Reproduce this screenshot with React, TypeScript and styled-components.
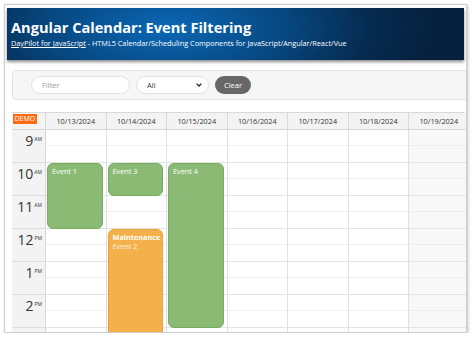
import React from "react";
import styled, { createGlobalStyle } from "styled-components";

const GlobalStyle = createGlobalStyle`
  html, body {
    margin: 0;
    padding: 0;
    background: #ffffff;
    overflow: hidden;
  }
  body {
    font-family: "Open Sans", "Noto Sans", sans-serif;
    color: #333333;
  }
`;

interface CalEvent {
  id: number;
  day: number;
  start: number;
  end: number;
  text: string;
  tag?: string;
  color: string;
  border: string;
}

const days = ["10/13/2024", "10/14/2024", "10/15/2024", "10/16/2024", "10/17/2024", "10/18/2024", "10/19/2024"];
// the last row (3 PM) is scrolled out of view, only its top edge shows
const hours = [
  { h: "9", m: "AM" },
  { h: "10", m: "AM" },
  { h: "11", m: "AM" },
  { h: "12", m: "PM" },
  { h: "1", m: "PM" },
  { h: "2", m: "PM" },
  { h: "", m: "" },
];

const events: CalEvent[] = [
  { id: 1, day: 0, start: 10, end: 12, text: "Event 1", color: "#8aba74", border: "#7aab65" },
  { id: 3, day: 1, start: 10, end: 11, text: "Event 3", color: "#8aba74", border: "#7aab65" },
  { id: 4, day: 2, start: 10, end: 15, text: "Event 4", color: "#8aba74", border: "#7aab65" },
  { id: 2, day: 1, start: 12, end: 16, text: "Event 2", tag: "Maintenance", color: "#f4b04a", border: "#e8a53e" },
];

const HOUR = 33;
const FIRST_HOUR = 9;

const Frame = styled.div`
  box-sizing: border-box;
  margin: 4px 0 0 4px;
  width: 463px;
  height: 329px;
  padding: 3px 2px 0 2px;
  border: 1px solid #cfcfcf;
  box-shadow: 1px 1px 3px rgba(0, 0, 0, 0.25);
  overflow: hidden;
  background: #ffffff;
`;

const Header = styled.div`
  box-sizing: border-box;
  height: 52px;
  padding: 10px 4px 0 4px;
  background: radial-gradient(ellipse 270px 110px at 160px 20px, #0b68b6 0%, #07477f 45%, #062b51 75%, #05203d 100%);
  box-shadow: 0 2px 3px rgba(0, 0, 0, 0.45);
  color: #ffffff;
`;

const Title = styled.h1`
  margin: 0;
  font-size: 14.6px;
  line-height: 18px;
  font-weight: 700;
`;

const Subtitle = styled.div`
  margin-top: 2px;
  font-size: 7.3px;
  line-height: 10px;
  white-space: nowrap;

  a {
    color: #ffffff;
    text-decoration: underline;
  }
`;

const Main = styled.div`
  padding: 10px 0 0 5px;
`;

const Toolbar = styled.div`
  box-sizing: border-box;
  display: flex;
  align-items: center;
  gap: 6px;
  height: 30px;
  width: 470px;
  padding: 0 18px;
  background: #f6f6f6;
  border: 1px solid #e4e4e4;
  border-radius: 4px;
`;

const FilterInput = styled.input`
  box-sizing: border-box;
  width: 99px;
  height: 18px;
  padding: 0 10px;
  border: 1px solid #e2e2e2;
  border-radius: 9px;
  background: #ffffff;
  font-family: inherit;
  font-size: 7.5px;
  color: #333333;
  outline: none;

  &::placeholder {
    color: #9a9a9a;
  }
`;

const SelectWrap = styled.div`
  position: relative;
  width: 73px;
  height: 18px;

  svg {
    position: absolute;
    right: 7px;
    top: 7px;
    pointer-events: none;
  }
`;

const Select = styled.select`
  display: block;
  box-sizing: border-box;
  appearance: none;
  width: 100%;
  height: 100%;
  margin: 0;
  padding: 0 10px;
  border: 1px solid #e2e2e2;
  border-radius: 9px;
  background: #ffffff;
  font-family: inherit;
  font-size: 7.5px;
  color: #333333;
  outline: none;
`;

const ClearButton = styled.button`
  box-sizing: border-box;
  width: 36px;
  height: 18px;
  padding: 0;
  border: none;
  border-radius: 9px;
  background: #676767;
  color: #ffffff;
  font-family: inherit;
  font-size: 7.5px;
`;

const Calendar = styled.div`
  margin-top: 12px;
  display: grid;
  grid-template-columns: 34px repeat(7, 60.5px);
  grid-template-rows: 17px auto;
  border-top: 1px solid #d8d8d8;
`;

const Corner = styled.div`
  box-sizing: border-box;
  display: flex;
  align-items: flex-start;
  background: #f3f3f3;
  border-right: 1px solid #d8d8d8;
  border-bottom: 1px solid #d8d8d8;
  padding: 1px 0 0 1px;
`;

const Demo = styled.span`
  display: block;
  height: 10px;
  padding: 0 1.5px;
  background: #ff6a13;
  color: #ffffff;
  font-size: 7px;
  line-height: 10px;
`;

const DayHeader = styled.div`
  box-sizing: border-box;
  display: flex;
  align-items: center;
  justify-content: center;
  background: #f3f3f3;
  border-right: 1px solid #d8d8d8;
  border-bottom: 1px solid #d8d8d8;
  font-size: 7.3px;
  color: #333333;
`;

const TimeColumn = styled.div`
  background: #f3f3f3;
  border-right: 1px solid #d8d8d8;
`;

const HourCell = styled.div`
  box-sizing: border-box;
  height: ${HOUR}px;
  border-bottom: 1px solid #dcdcdc;
  display: flex;
  justify-content: flex-end;
  align-items: flex-start;
  padding: 2px 3px 0 0;
  color: #333333;
`;

const HourNum = styled.span`
  font-size: 14px;
  line-height: 18px;
`;

const HourSuffix = styled.span`
  font-size: 5px;
  line-height: 10px;
  margin-left: 1px;
  margin-top: 2px;
`;

const DayColumn = styled.div<{ $shaded?: boolean }>`
  position: relative;
  box-sizing: border-box;
  border-right: 1px solid #e0e0e0;
  background: ${(p) => (p.$shaded ? "#f8f8f8" : "#ffffff")};
`;

const Slot = styled.div<{ $half?: boolean }>`
  box-sizing: border-box;
  height: ${(p) => (p.$half ? 16 : 17)}px;
  border-bottom: 1px solid ${(p) => (p.$half ? "#efefef" : "#e3e3e3")};
`;

const EventBox = styled.div<{ $color: string; $border: string }>`
  position: absolute;
  left: 1px;
  right: 3px;
  box-sizing: border-box;
  padding: 3px 4px;
  background: ${(p) => p.$color};
  border: 1px solid ${(p) => p.$border};
  border-radius: 6px;
  color: #ffffff;
  font-size: 7.3px;
  line-height: 9px;
  overflow: hidden;
`;

const EventTag = styled.div`
  font-weight: 700;
`;

const EventText = styled.div<{ $dim?: boolean }>`
  opacity: ${(p) => (p.$dim ? 0.85 : 1)};
`;

const Chevron = () => (
  <svg width="6" height="4" viewBox="0 0 6 4">
    <path d="M0.6 0.6 L3 3 L5.4 0.6" fill="none" stroke="#222" strokeWidth="1.3" />
  </svg>
);

export default function App() {
  return (
    <>
      <GlobalStyle />
      <Frame>
        <Header>
          <Title>Angular Calendar: Event Filtering</Title>
          <Subtitle>
            <a href="#">DayPilot for JavaScript</a> - HTML5 Calendar/Scheduling Components for JavaScript/Angular/React/Vue
          </Subtitle>
        </Header>
        <Main>
          <Toolbar>
            <FilterInput placeholder="Filter" />
            <SelectWrap>
              <Select defaultValue="all">
                <option value="all">All</option>
                <option value="maintenance">Maintenance</option>
              </Select>
              <Chevron />
            </SelectWrap>
            <ClearButton>Clear</ClearButton>
          </Toolbar>
          <Calendar>
            <Corner>
              <Demo>DEMO</Demo>
            </Corner>
            {days.map((d) => (
              <DayHeader key={d}>{d}</DayHeader>
            ))}
            <TimeColumn>
              {hours.map((h, i) => (
                <HourCell key={i}>
                  {h.h && <HourNum>{h.h}</HourNum>}
                  {h.m && <HourSuffix>{h.m}</HourSuffix>}
                </HourCell>
              ))}
            </TimeColumn>
            {days.map((d, i) => (
              <DayColumn key={d} $shaded={i === 6}>
                {hours.map((_, j) => (
                  <React.Fragment key={j}>
                    <Slot $half />
                    <Slot />
                  </React.Fragment>
                ))}
                {events
                  .filter((e) => e.day === i)
                  .map((e) => (
                    <EventBox
                      key={e.id}
                      $color={e.color}
                      $border={e.border}
                      style={{ top: (e.start - FIRST_HOUR) * HOUR, height: (e.end - e.start) * HOUR }}
                    >
                      {e.tag && <EventTag>{e.tag}</EventTag>}
                      <EventText $dim={!!e.tag}>{e.text}</EventText>
                    </EventBox>
                  ))}
              </DayColumn>
            ))}
          </Calendar>
        </Main>
      </Frame>
    </>
  );
}
